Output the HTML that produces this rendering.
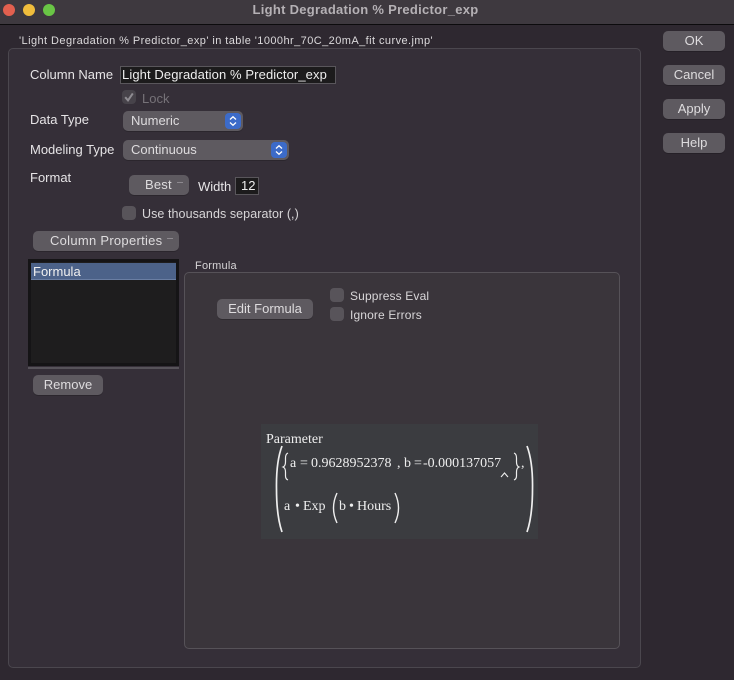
<!DOCTYPE html>
<html>
<head>
<meta charset="utf-8">
<style>
html,body{margin:0;padding:0}
body{width:734px;height:680px;overflow:hidden;background:#2e2830;position:relative;font-family:"Liberation Sans",sans-serif;font-size:13px;color:#dedcde}
#w{position:absolute;left:0;top:0;width:734px;height:680px;filter:blur(.3px)}
div,span{box-sizing:border-box}
.a{position:absolute}
.t{position:absolute;white-space:nowrap;line-height:16px;height:16px}
.btn{position:absolute;height:20px;background:#5e5a60;border-radius:5px;color:#dedcde;text-align:center;line-height:19px;box-shadow:0 1px 0 rgba(0,0,0,.18);white-space:nowrap}
.cb{position:absolute;width:14px;height:14px;background:#58545a;border-radius:4px}
.step{position:absolute;width:16px;height:16px;background:#3c6bc9;border-radius:4px}
.f{position:absolute;white-space:nowrap;font-family:"Liberation Serif",serif;font-size:14px;line-height:14px;color:#eeeeee}
.arrow{position:absolute;width:6px;height:1px;background:#8d898f}
</style>
</head>
<body>
<div id="w">
<div class="a" style="left:0;top:0;width:734px;height:24px;background:#3e393f"></div>
<div class="a" style="left:0;top:24px;width:734px;height:1px;background:#0c0b0d"></div>
<div class="a" style="left:3px;top:4px;width:12px;height:12px;border-radius:50%;background:#e2604f"></div>
<div class="a" style="left:23px;top:4px;width:12px;height:12px;border-radius:50%;background:#f0bd3c"></div>
<div class="a" style="left:43px;top:4px;width:12px;height:12px;border-radius:50%;background:#69c545"></div>
<div class="t" style="left:0;width:731px;text-align:center;top:2px;font-weight:bold;font-size:13px;letter-spacing:.28px;color:#b5b1b5">Light Degradation % Predictor_exp</div>

<div class="t" style="left:19px;top:33px;font-size:11px;letter-spacing:.43px;color:#dcdadc">'Light Degradation % Predictor_exp' in table '1000hr_70C_20mA_fit curve.jmp'</div>

<div class="a" style="left:8px;top:48px;width:633px;height:620px;background:#352f38;border:1px solid #4b474e;border-radius:5px"></div>

<div class="btn" style="left:663px;top:31px;width:62px">OK</div>
<div class="btn" style="left:663px;top:65px;width:62px">Cancel</div>
<div class="btn" style="left:663px;top:99px;width:62px">Apply</div>
<div class="btn" style="left:663px;top:133px;width:62px">Help</div>

<div class="t" style="left:30px;top:67px;color:#e6e4e6">Column Name</div>
<div class="a" style="left:120px;top:66px;width:216px;height:18px;background:#1c1b1c;border:1px solid #59565b"></div>
<div class="t" style="left:122px;top:67px;color:#eeeeee;letter-spacing:.1px">Light Degradation % Predictor_exp</div>

<div class="cb" style="left:122px;top:90px;background:#47434a">
<svg width="14" height="14" style="position:absolute;left:0;top:0"><path d="M3.2 7.2 L6 10.4 L10.8 3.4" fill="none" stroke="#8f8c92" stroke-width="2"/></svg>
</div>
<div class="t" style="left:142px;top:91px;color:#767278">Lock</div>

<div class="t" style="left:30px;top:112px;color:#e6e4e6">Data Type</div>
<div class="btn" style="left:123px;top:111px;width:120px;text-align:left;padding-left:8px;line-height:20px">Numeric</div>
<div class="step" style="left:225px;top:113px">
<svg width="16" height="16" style="position:absolute;left:0;top:0"><path d="M5 6.5 L8 3.8 L11 6.5 M5 9.5 L8 12.2 L11 9.5" fill="none" stroke="#fff" stroke-width="1.3"/></svg>
</div>

<div class="t" style="left:30px;top:142px;color:#e6e4e6">Modeling Type</div>
<div class="btn" style="left:123px;top:140px;width:166px;text-align:left;padding-left:8px;line-height:20px">Continuous</div>
<div class="step" style="left:271px;top:142px">
<svg width="16" height="16" style="position:absolute;left:0;top:0"><path d="M5 6.5 L8 3.8 L11 6.5 M5 9.5 L8 12.2 L11 9.5" fill="none" stroke="#fff" stroke-width="1.3"/></svg>
</div>

<div class="t" style="left:30px;top:170px;color:#e6e4e6">Format</div>
<div class="btn" style="left:129px;top:175px;width:60px;text-align:left;padding-left:16px;line-height:19px;letter-spacing:.2px">Best</div>
<div class="arrow" style="left:177px;top:182px"></div>
<div class="t" style="left:198px;top:179px;color:#e6e4e6">Width</div>
<div class="a" style="left:235px;top:177px;width:24px;height:18px;background:#1c1b1c;border:1px solid #59565b"></div>
<div class="t" style="left:241px;top:178px;color:#eeeeee">12</div>

<div class="cb" style="left:122px;top:206px"></div>
<div class="t" style="left:142px;top:206px;font-size:12.5px;letter-spacing:.07px;color:#d8d6d8">Use thousands separator (,)</div>

<div class="btn" style="left:33px;top:231px;width:146px;text-align:left;padding-left:17px;line-height:19px;letter-spacing:.28px">Column Properties</div>
<div class="arrow" style="left:167px;top:238px"></div>

<div class="a" style="left:28px;top:259px;width:151px;height:107px;background:#1e1d1e;border:3px solid #151416"></div>
<div class="a" style="left:28px;top:367px;width:151px;height:2px;background:#57535a"></div>
<div class="a" style="left:31px;top:263px;width:145px;height:17px;background:#4c6289;border-bottom:1px solid #6a7ea3"></div>
<div class="t" style="left:33px;top:264px;color:#f0f0f0">Formula</div>

<div class="btn" style="left:33px;top:375px;width:70px">Remove</div>

<div class="t" style="left:195px;top:258px;font-size:11px;letter-spacing:.02em;color:#d6d4d6">Formula</div>
<div class="a" style="left:184px;top:272px;width:436px;height:377px;background:#3a353b;border:1px solid #565258;border-radius:5px"></div>

<div class="btn" style="left:217px;top:299px;width:96px">Edit Formula</div>
<div class="cb" style="left:330px;top:288px"></div>
<div class="t" style="left:350px;top:288px;font-size:12px;letter-spacing:.14px;color:#d8d6d8">Suppress Eval</div>
<div class="cb" style="left:330px;top:307px"></div>
<div class="t" style="left:350px;top:307px;font-size:12px;letter-spacing:.14px;color:#d8d6d8">Ignore Errors</div>

<div class="a" style="left:261px;top:424px;width:277px;height:115px;background:#3b3c40"></div>
<div class="f" style="left:266px;top:433px">Parameter</div>
<div class="f" style="left:290px;top:457px">a</div>
<div class="f" style="left:300px;top:457px">=</div>
<div class="f" style="left:311px;top:457px">0.9628952378</div>
<div class="f" style="left:397px;top:457px">, b</div>
<div class="f" style="left:414px;top:457px">=</div>
<div class="f" style="left:423px;top:457px">-0.000137057</div>
<div class="f" style="left:521px;top:457px">,</div>
<div class="f" style="left:284px;top:500px">a</div>
<div class="f" style="left:295px;top:500px">•</div>
<div class="f" style="left:303px;top:500px">Exp</div>
<div class="f" style="left:339px;top:500px">b</div>
<div class="f" style="left:349px;top:500px">•</div>
<div class="f" style="left:357px;top:500px">Hours</div>
<svg class="a" style="left:261px;top:424px" width="277" height="115" fill="none" stroke="#eeeeee">
<path d="M21 22 Q15 38 15.5 65 Q15.5 92 21 108" stroke-width="1.7"/>
<path d="M266 22 Q272 38 271.5 65 Q271.5 92 266 108" stroke-width="1.7"/>
<path d="M27 29 Q24.5 30 24.5 34 L24.5 38 Q24.5 42 22 43 Q24.5 44 24.5 48 L24.5 52 Q24.5 55 27 56" stroke-width="1.2"/>
<path d="M253 29 Q255.5 30 255.5 34 L255.5 38 Q255.5 42 258 43 Q255.5 44 255.5 48 L255.5 52 Q255.5 55 253 56" stroke-width="1.2"/>
<path d="M240 53 L243.5 49 L247 53" stroke-width="1.1"/>
<path d="M76 69 Q69 84 76 99" stroke-width="1.4"/>
<path d="M134 69 Q141 84 134 99" stroke-width="1.4"/>
</svg>
</div>
</body>
</html>
